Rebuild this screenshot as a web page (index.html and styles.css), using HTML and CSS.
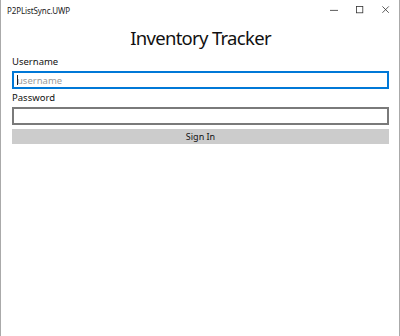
FILE: index.html
```html
<!DOCTYPE html>
<html lang="en">
<head>
    <meta charset="UTF-8">
    <meta name="viewport" content="width=device-width, initial-scale=1.0">
    <title>P2PListSync.UWP</title>
    <link rel="stylesheet" href="styles.css">
</head>
<body>

<div class="window">
    <div class="titlebar">
        <span class="app-name">P2PListSync.UWP</span>
        <div class="controls">
            <span class="ctrl">
                <svg width="10" height="10" viewBox="0 0 10 10"><path d="M0 5.5h10" stroke="#333" stroke-width="1"/></svg>
            </span>
            <span class="ctrl">
                <svg width="10" height="10" viewBox="0 0 10 10"><rect x="0.5" y="0.5" width="8" height="8" fill="none" stroke="#333" stroke-width="1"/></svg>
            </span>
            <span class="ctrl">
                <svg width="10" height="10" viewBox="0 0 10 10"><path d="M0.5 0.5l8 8M8.5 0.5l-8 8" stroke="#333" stroke-width="1"/></svg>
            </span>
        </div>
    </div>

    <div class="content">
        <h1 class="heading">Inventory Tracker</h1>

        <label class="label" for="username">Username</label>
        <div class="input focused">
            <span class="caret"></span>
            <input id="username" type="text" placeholder="username">
        </div>

        <label class="label" for="password">Password</label>
        <div class="input">
            <input id="password" type="password">
        </div>

        <button class="signin">Sign In</button>
    </div>
</div>

</body>
</html>
```

FILE: styles.css
```css
body {
    margin: 0;
    font-family: "Noto Sans", "Open Sans", sans-serif;
    background-color: #ffffff;
}
.window {
    width: 400px;
    height: 336px;
    box-sizing: border-box;
    border-left: 1px solid #aaaaaa;
    border-right: 1px solid #aaaaaa;
    background-color: #ffffff;
}
.titlebar {
    height: 20px;
    display: flex;
    align-items: center;
    justify-content: space-between;
}
.app-name {
    font-size: 8px;
    color: #222222;
    padding-left: 6px;
    letter-spacing: -0.1px;
}
.controls {
    display: flex;
    height: 100%;
}
.ctrl {
    width: 26px;
    display: flex;
    align-items: center;
    justify-content: center;
}
.ctrl svg {
    width: 8px;
    height: 8px;
}
.content {
    padding: 6px 10px 0 11px;
    display: flex;
    flex-direction: column;
}
.heading {
    margin: 0 0 6px;
    font-size: 18.5px;
    font-weight: normal;
    text-align: center;
    color: #111111;
    line-height: 24px;
    letter-spacing: -0.7px;
}
.label {
    font-size: 9.5px;
    color: #111111;
    line-height: 12px;
    margin-bottom: 3px;
}
.input {
    position: relative;
    height: 18px;
    border: 2px solid #7a7a7a;
    box-sizing: border-box;
    margin-bottom: 4px;
    display: flex;
    align-items: center;
}
.input.focused {
    border-color: #0078d7;
    margin-bottom: 3px;
}
.input input {
    border: none;
    outline: none;
    width: 100%;
    padding: 0 0 0 3px;
    font-family: inherit;
    font-size: 9.5px;
    background: transparent;
}
.input input::placeholder {
    color: #9a9a9a;
}
.caret {
    position: absolute;
    left: 3px;
    top: 2px;
    width: 1px;
    height: 10px;
    background-color: #222222;
}
.signin {
    height: 15px;
    border: none;
    background-color: #cccccc;
    color: #111111;
    font-family: inherit;
    font-size: 9px;
    padding: 0;
}
```
